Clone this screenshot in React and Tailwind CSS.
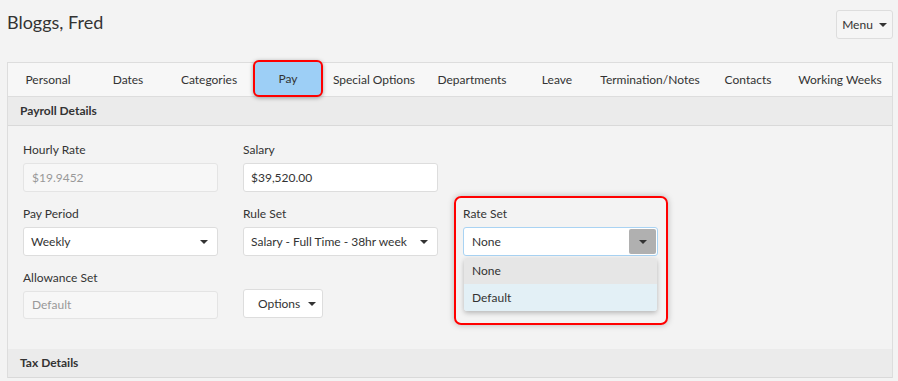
import React from 'react';

const tabs = [
  { label: 'Personal', w: 'w-[80px]' },
  { label: 'Dates', w: 'w-[80px]' },
  { label: 'Categories', w: 'w-[82px]' },
  { label: 'Pay', w: 'w-[76px]', active: true },
  { label: 'Special Options', w: 'w-[96px]' },
  { label: 'Departments', w: 'w-[100px]' },
  { label: 'Leave', w: 'w-[70px]' },
  { label: 'Termination/Notes', w: 'w-[116px]' },
  { label: 'Contacts', w: 'w-[80px]' },
  { label: 'Working Weeks', w: 'flex-1' },
];

const Caret = ({ className = '' }) => (
  <span className={`inline-block w-0 h-0 border-l-[4px] border-r-[4px] border-t-[4px] border-l-transparent border-r-transparent border-t-[#333] ${className}`} />
);

const Field = ({ label, children }) => (
  <div className="w-[195px]">
    <div className="text-[12px] text-[#333] h-[14px] leading-[14px] mb-[6px]">{label}</div>
    {children}
  </div>
);

const SelectBox = ({ value }) => (
  <div className="h-[29px] bg-white border border-[#ddd] rounded-[3px] flex items-center justify-between pl-[7px] pr-[9px] text-[12px] text-[#333]">
    <span>{value}</span>
    <Caret />
  </div>
);

const App = () => {
  return (
    <div className="w-[898px] h-[381px] overflow-hidden bg-[#f3f3f3] font-['Lato',sans-serif] text-[#333]">
      {/* Header */}
      <div className="flex justify-between items-start h-[62px] pl-[7px] pr-[5px]">
        <h1 className="text-[18px] leading-[22px] mt-[11px] text-[#333]">Bloggs, Fred</h1>
        <button className="mt-[10px] h-[29px] w-[57px] flex items-center justify-center gap-[6px] bg-[#f5f5f5] border border-[#ddd] rounded-[3px] text-[12px] text-[#333]">
          Menu <Caret />
        </button>
      </div>

      <div className="mx-[7px] w-[886px] border-x border-[#ddd]">
        {/* Tabs */}
        <div className="flex h-[35px] bg-[#f7f7f7] border-t border-b border-[#ddd]">
          {tabs.map((t) =>
            t.active ? (
              <div key={t.label} className={`${t.w} flex justify-center items-stretch`}>
                <div className="w-[70px] -mt-[3px] -mb-[1px] bg-[#9dcff6] border-2 border-[#ff0000] rounded-[6px] shadow-[0_1px_4px_rgba(0,0,0,0.35)] flex items-center justify-center text-[12px] text-[#333]">
                  {t.label}
                </div>
              </div>
            ) : (
              <div key={t.label} className={`${t.w} flex items-center justify-center text-[12px] text-[#333] whitespace-nowrap`}>
                {t.label}
              </div>
            )
          )}
        </div>

        {/* Payroll Details header */}
        <div className="h-[29px] bg-[#ebebeb] border-b border-[#d9d9d9] flex items-center pl-[12px] text-[12px] font-bold text-[#333]">
          Payroll Details
        </div>

        {/* Form */}
        <div className="h-[223px] pl-[15px] pt-[17px]">
          <div className="flex gap-[25px] mb-[15px]">
            <Field label="Hourly Rate">
              <div className="h-[29px] bg-[#f7f7f7] border border-[#e4e4e4] rounded-[3px] flex items-center px-[8px] text-[12px] text-[#999]">
                $19.9452
              </div>
            </Field>
            <Field label="Salary">
              <div className="h-[29px] bg-white border border-[#ddd] rounded-[3px] flex items-center px-[7px] text-[12px] text-[#333]">
                $39,520.00
              </div>
            </Field>
          </div>

          <div className="flex gap-[25px] mb-[15px]">
            <Field label="Pay Period">
              <SelectBox value="Weekly" />
            </Field>
            <Field label="Rule Set">
              <SelectBox value="Salary - Full Time - 38hr week" />
            </Field>
            <div className="relative z-10">
              <div className="absolute -left-[9px] -top-[11px] w-[214px] h-[129px] border-2 border-[#ff0000] rounded-[7px] shadow-[0_0_6px_rgba(0,0,0,0.25)] pointer-events-none" />
              <Field label="Rate Set">
                <div className="relative">
                  <div className="h-[29px] bg-white border border-[#a9d3f3] rounded-[3px] flex items-center justify-between pl-[8px] pr-[1px] text-[12px] text-[#333]">
                    <span>None</span>
                    <div className="w-[27px] h-[25px] bg-[#b0b0b0] rounded-[2px] flex items-center justify-center">
                      <Caret />
                    </div>
                  </div>
                  <div className="absolute left-[1px] right-[1px] top-[31px] rounded-[3px] overflow-hidden shadow-[0_2px_5px_rgba(0,0,0,0.25)] text-[12px] text-[#333]">
                    <div className="h-[26px] bg-[#e6e6e6] flex items-center pl-[8px]">None</div>
                    <div className="h-[27px] bg-[#e3f0f6] flex items-center pl-[8px]">Default</div>
                  </div>
                </div>
              </Field>
            </div>
          </div>

          <div className="flex gap-[25px] items-end">
            <Field label="Allowance Set">
              <div className="h-[28px] bg-[#f7f7f7] border border-[#e4e4e4] rounded-[3px] flex items-center px-[8px] text-[12px] text-[#999]">
                Default
              </div>
            </Field>
            <button className="h-[29px] mb-[1px] w-[80px] pl-[14px] bg-white border border-[#ddd] rounded-[3px] flex items-center gap-[8px] text-[12px] text-[#333]">
              Options <Caret />
            </button>
          </div>
        </div>

        {/* Tax Details header */}
        <div className="h-[29px] bg-[#ebebeb] border-b border-[#d9d9d9] flex items-center pl-[12px] text-[12px] font-bold text-[#333]">
          Tax Details
        </div>
      </div>
    </div>
  );
};

export default App;
